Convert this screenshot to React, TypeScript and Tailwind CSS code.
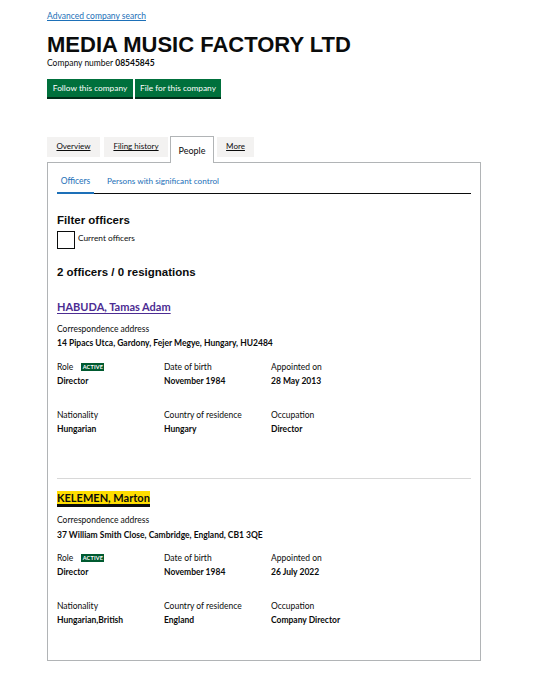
import React from "react";

const body = { fontFamily: "Lato, 'Noto Sans', sans-serif" };
const arial = { fontFamily: "'Liberation Sans', Arial, sans-serif" };

function Field({ label, value, badge }: { label: string; value: string; badge?: boolean }) {
  return (
    <div className="w-[107px]">
      <div className="flex items-center h-[12px] text-[8.5px] leading-[12px] text-[#0b0c0c]">
        <span>{label}</span>
        {badge && (
          <span className="ml-[8px] bg-[#005a30] text-white text-[5.5px] font-bold w-[23px] h-[8px] leading-[8px] text-center tracking-[0.2px]">
            ACTIVE
          </span>
        )}
      </div>
      <div className="mt-[2px] h-[12px] text-[8.5px] leading-[12px] font-bold text-[#0b0c0c]">{value}</div>
    </div>
  );
}

function Officer({
  name,
  highlight,
  address,
  appointed,
  nationality,
  country,
  occupation,
}: {
  name: string;
  highlight?: boolean;
  address: string;
  appointed: string;
  nationality: string;
  country: string;
  occupation: string;
}) {
  return (
    <div>
      <div className="h-[14px] flex items-start">
        {highlight ? (
          <span className="h-[13px] bg-[#ffdd00] text-[#0b0c0c] text-[11px] font-bold leading-[13px] shadow-[0_3px_0_#0b0c0c]">
            {name}
          </span>
        ) : (
          <span className="text-[#4c2c92] text-[11px] font-bold leading-[14px] underline underline-offset-[1.5px]">{name}</span>
        )}
      </div>
      <div className="mt-[9px] h-[12px] text-[8.5px] leading-[12px] text-[#0b0c0c]">Correspondence address</div>
      <div className="mt-[2.5px] h-[12px] text-[8.5px] leading-[12px] font-bold text-[#0b0c0c]">{address}</div>
      <div className="mt-[11.5px] flex">
        <Field label="Role" value="Director" badge />
        <Field label="Date of birth" value="November 1984" />
        <Field label="Appointed on" value={appointed} />
      </div>
      <div className="mt-[22px] flex">
        <Field label="Nationality" value={nationality} />
        <Field label="Country of residence" value={country} />
        <Field label="Occupation" value={occupation} />
      </div>
    </div>
  );
}

export default function App() {
  return (
    <div className="w-[535px] h-[685px] bg-white pl-[47px] pt-[10px] text-[8.5px] leading-[13.5px]" style={body}>
      <div className="h-[13.5px]">
        <a className="text-[8.5px] text-[#1d70b8] underline underline-offset-[1px]">Advanced company search</a>
      </div>
      <h1 className="mt-[9.5px] text-[22px] font-bold leading-[24px] text-[#0b0c0c]" style={arial}>
        MEDIA MUSIC FACTORY LTD
      </h1>
      <div className="h-[13.5px] text-[8.5px] text-[#0b0c0c]">
        Company number <span className="font-bold">08545845</span>
      </div>
      <div className="mt-[8px] flex gap-[2px]">
        <button className="w-[86px] h-[18px] pt-[1px] bg-[#00703c] text-white text-[8.3px] leading-[12px] shadow-[0_2px_0_#002d18]">
          Follow this company
        </button>
        <button className="w-[86px] h-[18px] pt-[1px] bg-[#00703c] text-white text-[8.3px] leading-[12px] shadow-[0_2px_0_#002d18]">
          File for this company
        </button>
      </div>

      <div className="mt-[39px] w-[434px]">
        <div className="flex items-end h-[26px]">
          <div className="w-[53px] h-[20px] pt-[1px] mb-[5px] bg-[#f3f2f1] flex items-center justify-center text-[8px] underline text-[#0b0c0c]">Overview</div>
          <div className="ml-[4px] w-[64px] h-[20px] pt-[1px] mb-[5px] bg-[#f3f2f1] flex items-center justify-center text-[8px] underline text-[#0b0c0c]">Filing history</div>
          <div className="ml-[2px] w-[44px] h-[27px] pt-[2px] bg-white border border-b-0 border-[#b1b4b6] flex items-center justify-center text-[9px] text-[#0b0c0c] relative -mb-[1px] z-10">People</div>
          <div className="ml-[3px] w-[37px] h-[20px] pt-[1px] mb-[5px] bg-[#f3f2f1] flex items-center justify-center text-[8px] underline text-[#0b0c0c]">More</div>
        </div>
        <div className="border border-[#b1b4b6] px-[9px] pt-[12px] pb-[34px]">
          <div className="flex items-start h-[19px] border-b border-[#0b0c0c]">
            <div className="w-[37px] h-[19px] text-center text-[8.5px] leading-[13.5px] text-[#1d70b8] border-b-[2px] border-[#1d70b8]">Officers</div>
            <div className="ml-[13px] text-[8.2px] leading-[13.5px] text-[#1d70b8]">Persons with significant control</div>
          </div>
          <div className="mt-[19px] h-[14px] text-[11.5px] font-bold text-[#0b0c0c] leading-[14px]" style={arial}>Filter officers</div>
          <div className="mt-[4px] flex items-start">
            <div className="w-[18px] h-[18px] border border-[#0b0c0c]"></div>
            <span className="ml-[3px] text-[8.3px] leading-[12px] text-[#0b0c0c] mt-[1px]">Current officers</span>
          </div>
          <div className="mt-[16px] h-[14px] text-[11.5px] font-bold text-[#0b0c0c] leading-[14px]" style={arial}>2 officers / 0 resignations</div>
          <div className="mt-[21px]">
            <Officer
              name="HABUDA, Tamas Adam"
              address="14 Pipacs Utca, Gardony, Fejer Megye, Hungary, HU2484"
              appointed="28 May 2013"
              nationality="Hungarian"
              country="Hungary"
              occupation="Director"
            />
          </div>
          <div className="mt-[43px] border-t border-[#d8d8d8]"></div>
          <div className="mt-[12.5px]">
            <Officer
              name="KELEMEN, Marton"
              highlight
              address="37 William Smith Close, Cambridge, England, CB1 3QE"
              appointed="26 July 2022"
              nationality="Hungarian,British"
              country="England"
              occupation="Company Director"
            />
          </div>
        </div>
      </div>
    </div>
  );
}
